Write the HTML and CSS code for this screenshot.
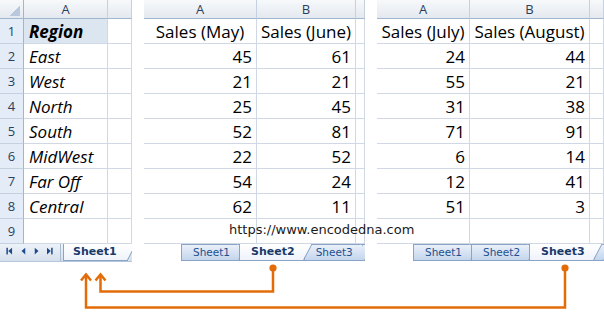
FILE: index.html
```html
<!DOCTYPE html>
<html lang="en">
<head>
  <meta charset="UTF-8">
  <title>Sheets</title>
  <link rel="stylesheet" href="styles.css">
</head>
<body>
  <div class="page">

    <!-- Sheet1 -->
    <div class="sheet sheet-1">
      <div class="grid">
        <div class="corner"></div><div class="col-head">A</div><div class="col-head"></div>
        <div class="row-head">1</div><div class="cell label title">Region</div><div class="cell"></div>
        <div class="row-head">2</div><div class="cell label">East</div><div class="cell"></div>
        <div class="row-head">3</div><div class="cell label">West</div><div class="cell"></div>
        <div class="row-head">4</div><div class="cell label">North</div><div class="cell"></div>
        <div class="row-head">5</div><div class="cell label">South</div><div class="cell"></div>
        <div class="row-head">6</div><div class="cell label">MidWest</div><div class="cell"></div>
        <div class="row-head">7</div><div class="cell label">Far Off</div><div class="cell"></div>
        <div class="row-head">8</div><div class="cell label">Central</div><div class="cell"></div>
        <div class="row-head">9</div><div class="cell"></div><div class="cell"></div>
      </div>
      <div class="tabs tabs-nav">
        <svg class="nav" width="60" height="18" viewBox="0 0 60 18">
          <rect x="5" y="4" width="1.6" height="7" fill="#1d4a8c"/>
          <polygon points="11,4 11,11 7,7.5" fill="#1d4a8c"/>
          <polygon points="25,4 25,11 21,7.5" fill="#1d4a8c"/>
          <polygon points="35,4 35,11 39,7.5" fill="#1d4a8c"/>
          <polygon points="48,4 48,11 52,7.5" fill="#1d4a8c"/>
          <rect x="52.4" y="4" width="1.6" height="7" fill="#1d4a8c"/>
        </svg>
        <div class="tab active">Sheet1</div>
      </div>
    </div>

    <!-- Sheet2 -->
    <div class="sheet sheet-2">
      <div class="grid">
        <div class="col-head">A</div><div class="col-head">B</div><div class="col-head"></div>
        <div class="cell center">Sales (May)</div><div class="cell center">Sales (June)</div><div class="cell"></div>
        <div class="cell num">45</div><div class="cell num">61</div><div class="cell"></div>
        <div class="cell num">21</div><div class="cell num">21</div><div class="cell"></div>
        <div class="cell num">25</div><div class="cell num">45</div><div class="cell"></div>
        <div class="cell num">52</div><div class="cell num">81</div><div class="cell"></div>
        <div class="cell num">22</div><div class="cell num">52</div><div class="cell"></div>
        <div class="cell num">54</div><div class="cell num">24</div><div class="cell"></div>
        <div class="cell num">62</div><div class="cell num">11</div><div class="cell"></div>
        <div class="cell"></div><div class="cell"></div><div class="cell"></div>
      </div>
      <div class="tabs">
        <div class="tab first">Sheet1</div>
        <div class="tab active">Sheet2</div>
        <div class="tab">Sheet3</div>
        <div class="tab stub"></div>
      </div>
    </div>

    <!-- Sheet3 -->
    <div class="sheet sheet-3">
      <div class="grid">
        <div class="col-head">A</div><div class="col-head">B</div><div class="col-head"></div>
        <div class="cell center">Sales (July)</div><div class="cell center">Sales (August)</div><div class="cell"></div>
        <div class="cell num">24</div><div class="cell num">44</div><div class="cell"></div>
        <div class="cell num">55</div><div class="cell num">21</div><div class="cell"></div>
        <div class="cell num">31</div><div class="cell num">38</div><div class="cell"></div>
        <div class="cell num">71</div><div class="cell num">91</div><div class="cell"></div>
        <div class="cell num">6</div><div class="cell num">14</div><div class="cell"></div>
        <div class="cell num">12</div><div class="cell num">41</div><div class="cell"></div>
        <div class="cell num">51</div><div class="cell num">3</div><div class="cell"></div>
        <div class="cell"></div><div class="cell"></div><div class="cell"></div>
      </div>
      <div class="tabs">
        <div class="tab first">Sheet1</div>
        <div class="tab">Sheet2</div>
        <div class="tab active">Sheet3</div>
        <div class="tab stub"></div>
      </div>
    </div>

    <p class="url">https://www.encodedna.com</p>

    <!-- links from Sheet2 / Sheet3 back to Sheet1 -->
    <svg class="links" width="604" height="313" viewBox="0 0 604 313">
      <g fill="none" stroke="#e36c09" stroke-width="2.5" stroke-linejoin="miter">
        <path d="M273 268 V291.5 H100.5 V275"/>
        <path d="M565 268 V307.5 H86 V275"/>
        <path d="M95.5 280.5 L100.5 274.5 L105.5 280.5"/>
        <path d="M81 280.5 L86 274.5 L91 280.5"/>
      </g>
      <circle cx="273" cy="268" r="3.6" fill="#e36c09"/>
      <circle cx="565" cy="268" r="3.6" fill="#e36c09"/>
    </svg>
  </div>
</body>
</html>
```

FILE: styles.css
```css
body {
  margin: 0;
  background: #fff;
  font-family: "Open Sans", "Noto Sans", sans-serif;
}

.page {
  position: relative;
  width: 604px;
  height: 313px;
  display: grid;
  grid-template-columns: 132px 221px 227px;
  column-gap: 12px;
  align-items: start;
  overflow: hidden;
}

.sheet {
  overflow: hidden;
}

.grid {
  display: grid;
  grid-template-rows: 19px repeat(9, 25px);
}

.sheet-1 .grid {
  grid-template-columns: 24px 84px 24px;
}

.sheet-2 .grid {
  grid-template-columns: 113px 99px 9px;
}

.sheet-3 .grid {
  grid-template-columns: 93px 120px 14px;
}

.corner,
.col-head {
  box-sizing: border-box;
  border-right: 1px solid #c5d1de;
  border-bottom: 1px solid #9eb6ce;
  background: linear-gradient(#f7f9fb, #e4e9ef);
  font: 13px/18px "Open Sans", sans-serif;
  color: #2b3f5c;
  text-align: center;
}

.corner {
  border-right-color: #9eb6ce;
  background:
    linear-gradient(135deg, transparent 62%, #b9c8dc 62%) no-repeat 5px 3px / 15px 13px,
    linear-gradient(#f7f9fb, #e4e9ef);
}

.row-head {
  box-sizing: border-box;
  border-right: 1px solid #9eb6ce;
  border-bottom: 1px solid #c5d1de;
  background: #e4ecf7;
  font: 13px/25px "Open Sans", sans-serif;
  color: #2b3f5c;
  text-align: center;
}

.cell {
  box-sizing: border-box;
  border-right: 1px solid #d0d7e5;
  border-bottom: 1px solid #d0d7e5;
  padding: 0 4px;
  font-size: 17px;
  line-height: 25px;
  color: #000;
  white-space: nowrap;
}

.label {
  font-style: italic;
  padding-left: 5px;
}

.title {
  font-weight: bold;
  background: #dce6f1;
}

.center {
  text-align: center;
  padding: 0;
}

.num {
  text-align: right;
}

/* sheet tabs */

.tabs {
  display: flex;
  align-items: flex-start;
  height: 18px;
  padding-left: 37px;
}

.sheet-3 .tabs {
  padding-left: 36px;
}

.tabs-nav {
  padding-left: 0;
  background: linear-gradient(#edf2f8, #d6e0ed);
  border-bottom: 1px solid #b4c5dc;
  height: 17px;
}

.nav {
  flex: none;
  border-right: 1px solid #a9bcd6;
  margin-right: 2px;
  height: 17px;
}

.tab {
  position: relative;
  z-index: 1;
  height: 15px;
  padding: 0 7px 0 11px;
  border: 1px solid #8aa4c8;
  border-right: none;
  margin-right: 2px;
  background: linear-gradient(#e9f0f9, #c4d5ed);
  font: 10.5px/15px "DejaVu Sans", sans-serif;
  color: #22508f;
  white-space: nowrap;
}

.tab::after {
  content: "";
  position: absolute;
  z-index: -1;
  top: -1px;
  bottom: -1px;
  right: -6px;
  width: 10px;
  box-sizing: border-box;
  border: 1px solid #8aa4c8;
  border-left: none;
  background: inherit;
  transform: skewX(-28deg);
}

.tab.active {
  z-index: 2;
  border-top: none;
  height: 16px;
  background: linear-gradient(#ffffff, #eef3fa);
  font-weight: bold;
  font-size: 11px;
  color: #19396b;
}

.tab.active::after {
  top: 0;
  border-top: none;
}

.tabs-nav .tab.active {
  height: 16px;
  padding: 0 9px 0 9px;
  border-bottom: 1px solid #8aa4c8;
}

.tab.stub {
  width: 20px;
  padding: 0;
}

.url {
  position: absolute;
  left: 229px;
  top: 222px;
  margin: 0;
  font: 13px/16px "DejaVu Sans", sans-serif;
  color: #1a1a1a;
}

.links {
  position: absolute;
  left: 0;
  top: 0;
  pointer-events: none;
}
```
